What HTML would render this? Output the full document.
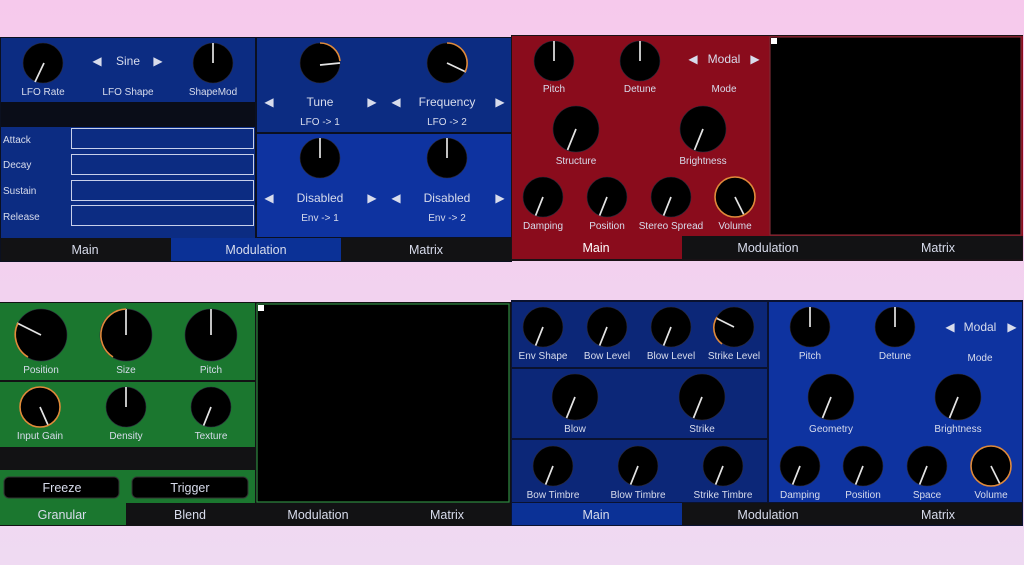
<!DOCTYPE html>
<html><head><meta charset="utf-8"><style>
html,body{margin:0;padding:0}
body{width:1024px;height:565px;overflow:hidden;background:linear-gradient(#f6c9ec,#efdaf2)}
svg{display:block}
text{font-family:"Liberation Sans",sans-serif;fill:#d8dcec;font-size:10px;text-anchor:middle}
.t{font-size:12.5px}
.b{font-size:12px}
.k circle{fill:#000;stroke:#2a2a3a;stroke-width:.6}
.k line{stroke:#e4e4e4;stroke-width:1.7}
.o{fill:none;stroke:#e08a3a;stroke-width:1.6}
</style></head><body>
<svg width="1024" height="565" viewBox="0 0 1024 565">
<!-- PANEL 1 -->
<rect x="0" y="37" width="512" height="225" fill="#0b1020"/>
<rect x="1" y="38" width="254" height="64" fill="#0c2c82"/>
<rect x="1" y="102" width="254" height="25" fill="#0a0d18"/>
<rect x="1" y="127" width="254" height="111" fill="#0c2c82"/>
<rect x="257" y="38" width="254" height="94" fill="#0c2c82"/>
<rect x="257" y="134" width="254" height="103" fill="#0e33a0"/>
<g fill="none" stroke="#c8d0ea" stroke-width="1">
<rect x="71.5" y="128.5" width="182" height="20"/><rect x="71.5" y="154.5" width="182" height="20"/>
<rect x="71.5" y="180.5" width="182" height="20"/><rect x="71.5" y="205.5" width="182" height="20"/></g>
<g style="text-anchor:start"><text x="3" y="143" style="text-anchor:start">Attack</text><text x="3" y="168" style="text-anchor:start">Decay</text><text x="3" y="194" style="text-anchor:start">Sustain</text><text x="3" y="220" style="text-anchor:start">Release</text></g>
<g class="k" transform="translate(43,63)"><circle r="20"/><line x1="1" y1="0" x2="-8" y2="19"/></g>
<g class="k" transform="translate(213,63)"><circle r="20"/><line x1="0" y1="0" x2="0" y2="-20"/></g>
<text x="128" y="65" class="b">Sine</text><text x="97" y="65" class="b">◀</text><text x="158" y="65" class="b">▶</text>
<text x="43" y="95">LFO Rate</text><text x="128" y="95">LFO Shape</text><text x="213" y="95">ShapeMod</text>
<g class="k" transform="translate(320,63)"><circle r="20"/><line x1="0" y1="2" x2="20" y2="0"/></g>
<path class="o" d="M320 43 A20 20 0 0 1 340 61"/>
<g class="k" transform="translate(447,63)"><circle r="20"/><line x1="0" y1="0" x2="19" y2="9"/></g>
<path class="o" d="M447 43 A20 20 0 0 1 465 72"/>
<text x="320" y="106" class="b">Tune</text><text x="447" y="106" class="b">Frequency</text>
<text x="269" y="106" class="b">◀</text><text x="372" y="106" class="b">▶</text><text x="396" y="106" class="b">◀</text><text x="500" y="106" class="b">▶</text>
<text x="320" y="125">LFO -&gt; 1</text><text x="447" y="125">LFO -&gt; 2</text>
<g class="k" transform="translate(320,158)"><circle r="20"/><line x1="0" y1="0" x2="0" y2="-20"/></g>
<g class="k" transform="translate(447,158)"><circle r="20"/><line x1="0" y1="0" x2="0" y2="-20"/></g>
<text x="320" y="202" class="b">Disabled</text><text x="447" y="202" class="b">Disabled</text>
<text x="269" y="202" class="b">◀</text><text x="372" y="202" class="b">▶</text><text x="396" y="202" class="b">◀</text><text x="500" y="202" class="b">▶</text>
<text x="320" y="221">Env -&gt; 1</text><text x="447" y="221">Env -&gt; 2</text>
<rect x="1" y="238" width="510" height="23" fill="#121214"/>
<rect x="171" y="238" width="170" height="23" fill="#0b3196"/>
<text x="85" y="254" class="t">Main</text><text x="256" y="254" class="t">Modulation</text><text x="426" y="254" class="t">Matrix</text>

<!-- PANEL 2 -->
<rect x="511" y="35" width="512" height="226" fill="#1a1216"/>
<rect x="512" y="36" width="511" height="200" fill="#8a0c1c"/>
<rect x="770" y="37" width="251" height="198" fill="#000" stroke="#7a2a34" stroke-width="1.2"/>
<rect x="771" y="38" width="6" height="6" fill="#fff"/>
<g class="k" transform="translate(554,61)"><circle r="20"/><line x1="0" y1="0" x2="0" y2="-20"/></g>
<g class="k" transform="translate(640,61)"><circle r="20"/><line x1="0" y1="0" x2="0" y2="-20"/></g>
<text x="724" y="63" class="b">Modal</text><text x="693" y="63" class="b">◀</text><text x="755" y="63" class="b">▶</text>
<text x="554" y="92">Pitch</text><text x="640" y="92">Detune</text><text x="724" y="92">Mode</text>
<g class="k" transform="translate(576,129)"><circle r="23"/><line x1="0" y1="0" x2="-8.5" y2="21"/></g>
<g class="k" transform="translate(703,129)"><circle r="23"/><line x1="0" y1="0" x2="-8.5" y2="21"/></g>
<text x="576" y="164">Structure</text><text x="703" y="164">Brightness</text>
<g class="k" transform="translate(543,197)"><circle r="20"/><line x1="0" y1="0" x2="-7.4" y2="18.6"/></g>
<g class="k" transform="translate(607,197)"><circle r="20"/><line x1="0" y1="0" x2="-7.4" y2="18.6"/></g>
<g class="k" transform="translate(671,197)"><circle r="20"/><line x1="0" y1="0" x2="-7.4" y2="18.6"/></g>
<g class="k" transform="translate(735,197)"><circle r="20"/><line x1="0" y1="0" x2="9" y2="18"/></g>
<circle class="o" cx="735" cy="197" r="20"/>
<text x="543" y="229">Damping</text><text x="607" y="229">Position</text><text x="671" y="229">Stereo Spread</text><text x="735" y="229">Volume</text>
<rect x="682" y="236" width="340" height="23" fill="#121214"/>
<rect x="512" y="236" width="170" height="23" fill="#8a0c1c"/>
<text x="596" y="252" class="t" style="fill:#fff">Main</text><text x="768" y="252" class="t">Modulation</text><text x="938" y="252" class="t">Matrix</text>

<!-- PANEL 3 -->
<rect x="0" y="302" width="512" height="224" fill="#121214"/>
<rect x="0" y="303" width="255" height="77" fill="#1b772f"/>
<rect x="0" y="382" width="255" height="65" fill="#1b772f"/>
<rect x="0" y="470" width="255" height="33" fill="#1b772f"/>
<rect x="257" y="304" width="252" height="198" fill="#000" stroke="#2e8a40" stroke-width="1.2"/>
<rect x="258" y="305" width="6" height="6" fill="#fff"/>
<g class="k" transform="translate(41,335)"><circle r="26"/><line x1="0" y1="0" x2="-24" y2="-12"/></g>
<path class="o" d="M28 357 A26 26 0 0 1 18 323"/>
<g class="k" transform="translate(126,335)"><circle r="26"/><line x1="0" y1="0" x2="0" y2="-26"/></g>
<path class="o" d="M113 357 A26 26 0 0 1 126 309"/>
<g class="k" transform="translate(211,335)"><circle r="26"/><line x1="0" y1="0" x2="0" y2="-26"/></g>
<text x="41" y="373">Position</text><text x="126" y="373">Size</text><text x="211" y="373">Pitch</text>
<g class="k" transform="translate(40,407)"><circle r="20"/><line x1="0" y1="0" x2="8" y2="18"/></g>
<circle class="o" cx="40" cy="407" r="20"/>
<g class="k" transform="translate(126,407)"><circle r="20"/><line x1="0" y1="0" x2="0" y2="-20"/></g>
<g class="k" transform="translate(211,407)"><circle r="20"/><line x1="0" y1="0" x2="-7.4" y2="18.6"/></g>
<text x="40" y="439">Input Gain</text><text x="126" y="439">Density</text><text x="211" y="439">Texture</text>
<rect x="4" y="477" width="115" height="21" rx="5" fill="#000" stroke="#333"/>
<rect x="132" y="477" width="116" height="21" rx="5" fill="#000" stroke="#333"/>
<text x="62" y="492" class="t">Freeze</text><text x="190" y="492" class="t">Trigger</text>
<rect x="0" y="503" width="126" height="22" fill="#1b772f"/>
<text x="62" y="519" class="t">Granular</text><text x="190" y="519" class="t">Blend</text><text x="318" y="519" class="t">Modulation</text><text x="447" y="519" class="t">Matrix</text>

<!-- PANEL 4 -->
<rect x="511" y="300" width="512" height="226" fill="#0a1230"/>
<rect x="512" y="302" width="255" height="65" fill="#0c2778"/>
<rect x="512" y="369" width="255" height="69" fill="#0c2778"/>
<rect x="512" y="440" width="255" height="62" fill="#0c2778"/>
<rect x="769" y="302" width="253" height="200" fill="#0e33a0"/>
<g class="k" transform="translate(543,327)"><circle r="20"/><line x1="0" y1="0" x2="-7.4" y2="18.6"/></g>
<g class="k" transform="translate(607,327)"><circle r="20"/><line x1="0" y1="0" x2="-7.4" y2="18.6"/></g>
<g class="k" transform="translate(671,327)"><circle r="20"/><line x1="0" y1="0" x2="-7.4" y2="18.6"/></g>
<g class="k" transform="translate(734,327)"><circle r="20"/><line x1="0" y1="0" x2="-18" y2="-9"/></g>
<path class="o" d="M722 344 A20 20 0 0 1 717 317"/>
<text x="543" y="359">Env Shape</text><text x="607" y="359">Bow Level</text><text x="671" y="359">Blow Level</text><text x="734" y="359">Strike Level</text>
<g class="k" transform="translate(575,397)"><circle r="23"/><line x1="0" y1="0" x2="-8.5" y2="21"/></g>
<g class="k" transform="translate(702,397)"><circle r="23"/><line x1="0" y1="0" x2="-8.5" y2="21"/></g>
<text x="575" y="432">Blow</text><text x="702" y="432">Strike</text>
<g class="k" transform="translate(553,466)"><circle r="20"/><line x1="0" y1="0" x2="-7.4" y2="18.6"/></g>
<g class="k" transform="translate(638,466)"><circle r="20"/><line x1="0" y1="0" x2="-7.4" y2="18.6"/></g>
<g class="k" transform="translate(723,466)"><circle r="20"/><line x1="0" y1="0" x2="-7.4" y2="18.6"/></g>
<text x="553" y="498">Bow Timbre</text><text x="638" y="498">Blow Timbre</text><text x="723" y="498">Strike Timbre</text>
<g class="k" transform="translate(810,327)"><circle r="20"/><line x1="0" y1="0" x2="0" y2="-20"/></g>
<g class="k" transform="translate(895,327)"><circle r="20"/><line x1="0" y1="0" x2="0" y2="-20"/></g>
<text x="980" y="331" class="b">Modal</text><text x="950" y="331" class="b">◀</text><text x="1012" y="331" class="b">▶</text>
<text x="810" y="359">Pitch</text><text x="895" y="359">Detune</text><text x="980" y="361">Mode</text>
<g class="k" transform="translate(831,397)"><circle r="23"/><line x1="0" y1="0" x2="-8.5" y2="21"/></g>
<g class="k" transform="translate(958,397)"><circle r="23"/><line x1="0" y1="0" x2="-8.5" y2="21"/></g>
<text x="831" y="432">Geometry</text><text x="958" y="432">Brightness</text>
<g class="k" transform="translate(800,466)"><circle r="20"/><line x1="0" y1="0" x2="-7.4" y2="18.6"/></g>
<g class="k" transform="translate(863,466)"><circle r="20"/><line x1="0" y1="0" x2="-7.4" y2="18.6"/></g>
<g class="k" transform="translate(927,466)"><circle r="20"/><line x1="0" y1="0" x2="-7.4" y2="18.6"/></g>
<g class="k" transform="translate(991,466)"><circle r="20"/><line x1="0" y1="0" x2="9" y2="18"/></g>
<circle class="o" cx="991" cy="466" r="20"/>
<text x="800" y="498">Damping</text><text x="863" y="498">Position</text><text x="927" y="498">Space</text><text x="991" y="498">Volume</text>
<rect x="512" y="503" width="510" height="22" fill="#121214"/>
<rect x="512" y="503" width="170" height="22" fill="#0b3196"/>
<text x="596" y="519" class="t">Main</text><text x="768" y="519" class="t">Modulation</text><text x="938" y="519" class="t">Matrix</text>
</svg>
</body></html>
